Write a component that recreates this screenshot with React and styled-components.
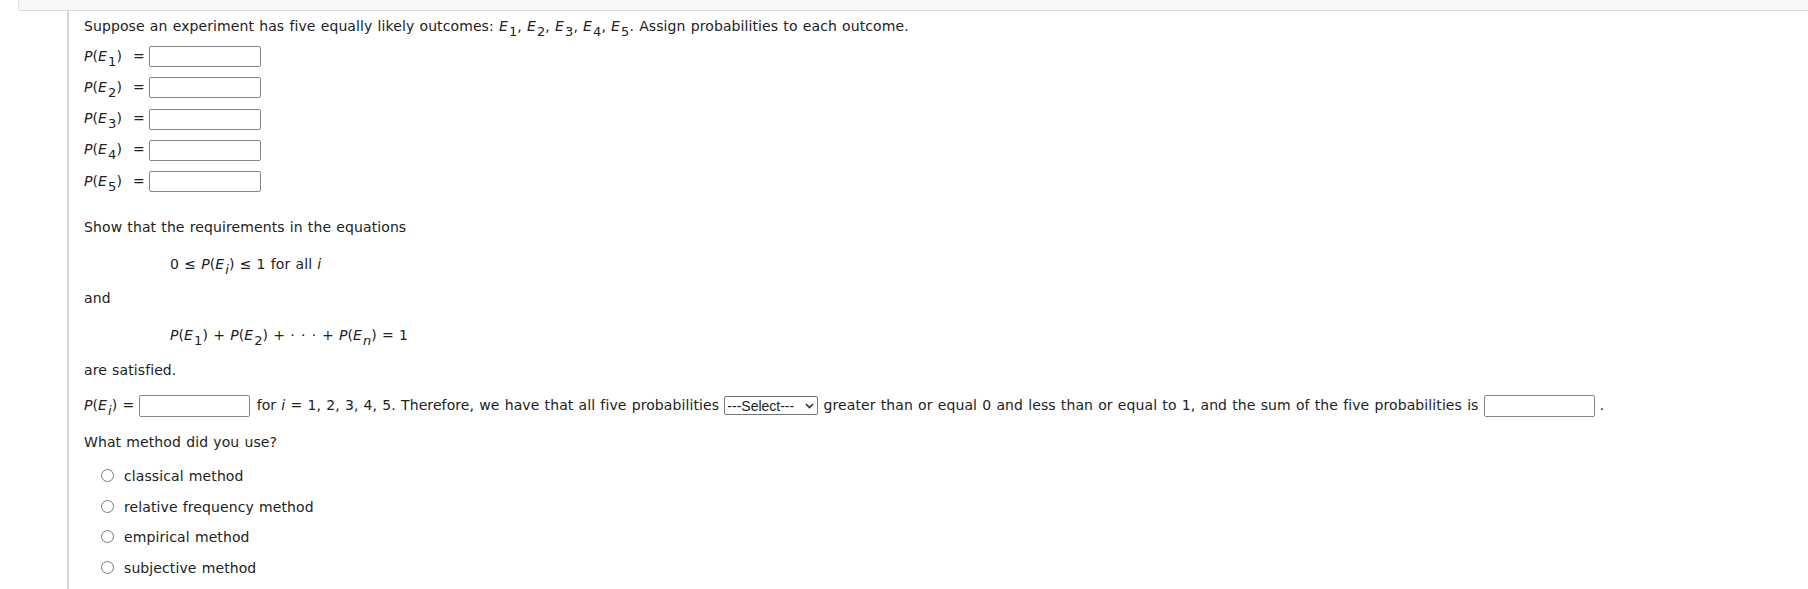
import React from "react";
import styled, { createGlobalStyle } from "styled-components";

const Global = createGlobalStyle`
  html, body { margin: 0; padding: 0; background: #fff; }
  body {
    font-family: "DejaVu Sans", Verdana, sans-serif;
    font-size: 14px;
    letter-spacing: 0.1px;
    word-spacing: 0.6px;
    color: #222;
  }
`;

const Page = styled.div`
  padding-left: 18px;
  min-height: 589px;
  box-sizing: border-box;
  display: flex;
  flex-direction: column;
`;

const TopBar = styled.div`
  height: 10px;
  background: #f7f7f7;
  border-left: 1px solid #e2e2e2;
  border-bottom: 1px solid #d9d9d9;
  border-bottom-left-radius: 2px;
`;

const Body = styled.div`
  flex: 1;
  margin-left: 49px;
  border-left: 2px solid #d6d6d6;
  padding: 5px 0 20px 15px;
  display: flex;
  flex-direction: column;
`;

const Line = styled.div`
  height: ${(p) => p.$h || 20}px;
  line-height: ${(p) => p.$h || 20}px;
  margin-top: ${(p) => p.$mt || 0}px;
  padding-left: ${(p) => p.$indent || 0}px;
  white-space: nowrap;
`;

const Var = styled.i`
  font-style: italic;
`;

const Sub = styled.span`
  font-size: 13px;
  position: relative;
  top: 5px;
  margin: 0 0 0 1px;
`;

const Eq = styled.span`
  display: inline-block;
  width: ${(p) => p.$w}px;
`;

const Field = styled.input`
  box-sizing: border-box;
  display: inline-block;
  vertical-align: middle;
  width: ${(p) => p.$w || 111}px;
  height: ${(p) => p.$h || 22}px;
  border: 1px solid #858585;
  border-radius: 2px;
  background: #fff;
  padding: 0 4px;
  margin: 0 ${(p) => p.$mr || 0}px 0 0;
  font: inherit;
`;

const SelectWrap = styled.span`
  position: relative;
  display: inline-block;
  vertical-align: middle;
  height: 19px;
  line-height: normal;
`;

const Select = styled.select`
  appearance: none;
  -webkit-appearance: none;
  box-sizing: border-box;
  display: block;
  width: 94px;
  height: 19px;
  border: 1px solid #767676;
  border-radius: 2px;
  background: #fff;
  padding: 0 14px 0 2px;
  margin: 0;
  font-family: "Liberation Sans", Arial, sans-serif;
  font-size: 14px;
  letter-spacing: 0;
  word-spacing: 0;
  color: #222;
`;

const Chevron = styled.svg`
  position: absolute;
  right: 4px;
  top: 7px;
  pointer-events: none;
`;

const RadioRow = styled.label`
  display: flex;
  align-items: center;
  height: 20px;
  margin-top: ${(p) => p.$mt || 0}px;
  padding-left: 17px;
  cursor: pointer;
`;

const RadioDot = styled.span`
  box-sizing: border-box;
  width: 13px;
  height: 13px;
  border-radius: 50%;
  border: 1px solid #7a7a7a;
  background: #fff;
  margin-right: 10px;
  flex: none;
`;

const Dots = styled.span`
  letter-spacing: 0.6px;
`;

const Period = styled.span`
  margin-left: 5px;
`;

const PE = ({ s }) => (
  <>
    <Var>P</Var>(<Var>E</Var>
    <Sub as={/[a-z]/.test(s) ? "i" : "span"}>{s}</Sub>)
  </>
);

const E = ({ s }) => (
  <>
    <Var>E</Var>
    <Sub>{s}</Sub>
  </>
);

const methods = [
  "classical method",
  "relative frequency method",
  "empirical method",
  "subjective method",
];

export default function App() {
  return (
    <>
      <Global />
      <Page>
        <TopBar />
        <Body>
          <Line $h={20}>
            Suppose an experiment has five equally likely outcomes: <E s="1" />, <E s="2" />, <E s="3" />, <E s="4" />, <E s="5" />. Assign probabilities to each outcome.
          </Line>
          {[1, 2, 3, 4, 5].map((n, i) => (
            <Line key={n} $h={21} $mt={i === 0 ? 9.5 : 10.3}>
              <Eq $w={49}>
                <PE s={String(n)} />
              </Eq>
              <Eq $w={16}>=</Eq>
              <Field $w={112} $h={21} />
            </Line>
          ))}
          <Line $mt={25}>Show that the requirements in the equations</Line>
          <Line $mt={17} $indent={86}>
            0 ≤ <PE s="i" /> ≤ 1 for all <Var>i</Var>
          </Line>
          <Line $mt={14.6}>and</Line>
          <Line $mt={17} $indent={86}>
            <PE s="1" /> + <PE s="2" /> + <Dots>· · ·</Dots> + <PE s="n" /> = 1
          </Line>
          <Line $mt={14.4}>are satisfied.</Line>
          <Line $h={22} $mt={14}>
            <PE s="i" /> = <Field $w={111} $mr={1} /> for <Var>i</Var> = 1, 2, 3, 4, 5. Therefore, we have that all five probabilities{" "}
            <SelectWrap>
              <Select defaultValue="">
                <option value="">---Select---</option>
                <option value="are">are</option>
                <option value="are not">are not</option>
              </Select>
              <Chevron width="9" height="6" viewBox="0 0 9 6">
                <path d="M1 1l3.5 3.5L8 1" fill="none" stroke="#333" strokeWidth="1.6" />
              </Chevron>
            </SelectWrap>{" "}
            greater than or equal 0 and less than or equal to 1, and the sum of the five probabilities is <Field $w={111} />
            <Period>.</Period>
          </Line>
          <Line $mt={16.8}>What method did you use?</Line>
          {methods.map((m, i) => (
            <RadioRow key={m} $mt={i === 0 ? 13.2 : [11, 10, 11][i - 1]}>
              <RadioDot />
              {m}
            </RadioRow>
          ))}
        </Body>
      </Page>
    </>
  );
}
